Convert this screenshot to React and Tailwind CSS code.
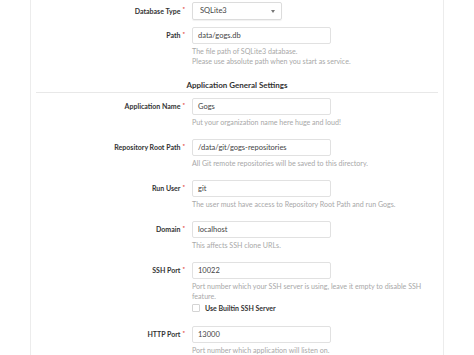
import React from "react";

function Req() {
  return <span className="ml-[2px] -mt-[4px] text-[6px] leading-none text-[#db2828]">*</span>;
}

function Label({ children }) {
  return (
    <div className="flex w-[155px] shrink-0 items-center justify-end pr-[1px] text-[7px] font-bold text-[#333]">
      {children}
      <Req />
    </div>
  );
}

function Field({ label, value, help, className = "" }) {
  return (
    <div className={className}>
      <div className="flex items-center gap-[6px]">
        <Label>{label}</Label>
        <div className="flex h-[17px] w-[139px] items-center rounded-[2px] border border-[#e1e1e1] px-[5px] text-[7.5px] text-[#444]">
          {value}
        </div>
      </div>
      {help && (
        <div className="ml-[161px] mt-[3px] w-[245px] text-[7.1px] leading-[10px] text-[#a8a8a8]">
          {help}
        </div>
      )}
    </div>
  );
}

export default function App() {
  return (
    <div className="h-[355px] w-[474px] overflow-hidden bg-white font-['Lato',sans-serif]">
      <div className="ml-[30px] h-full w-[414px] border-x border-[#ececec] pt-[2px]">
        {/* Database */}
        <div className="flex items-center gap-[6px]">
          <Label>Database Type</Label>
          <div className="flex h-[18px] w-[90px] items-center justify-between rounded-[2px] border border-[#dcdcdc] pl-[7px] pr-[6px] text-[7.5px] text-[#444] shadow-[0_1px_1px_rgba(0,0,0,0.06)]">
            SQLite3
            <svg width="4" height="3" viewBox="0 0 4 3">
              <path d="M0 0 L4 0 L2 3 Z" fill="#777" />
            </svg>
          </div>
        </div>
        <Field
          className="mt-[7px]"
          label="Path"
          value="data/gogs.db"
          help={
            <>
              The file path of SQLite3 database.
              <br />
              Please use absolute path when you start as service.
            </>
          }
        />

        {/* Application General Settings */}
        <div className="mx-[5px] mt-[13px] border-b border-[#e8e8e8] pb-[2px] text-center text-[8px] font-bold leading-[10px] text-[#333]">
          Application General Settings
        </div>

        <Field
          className="mt-[5px]"
          label="Application Name"
          value="Gogs"
          help="Put your organization name here huge and loud!"
        />
        <Field
          className="mt-[11px]"
          label="Repository Root Path"
          value="/data/git/gogs-repositories"
          help="All Git remote repositories will be saved to this directory."
        />
        <Field
          className="mt-[11px]"
          label="Run User"
          value="git"
          help="The user must have access to Repository Root Path and run Gogs."
        />
        <Field
          className="mt-[11px]"
          label="Domain"
          value="localhost"
          help="This affects SSH clone URLs."
        />
        <Field
          className="mt-[11px]"
          label="SSH Port"
          value="10022"
          help="Port number which your SSH server is using, leave it empty to disable SSH feature."
        />
        <div className="ml-[161px] mt-[1px] flex h-[10px] items-center gap-[5px]">
          <span className="h-[8px] w-[8px] rounded-[1px] border border-[#d4d4d4] bg-white" />
          <span className="text-[7px] font-bold text-[#333]">Use Builtin SSH Server</span>
        </div>
        <Field
          className="mt-[13px]"
          label="HTTP Port"
          value="13000"
          help="Port number which application will listen on."
        />
      </div>
    </div>
  );
}
